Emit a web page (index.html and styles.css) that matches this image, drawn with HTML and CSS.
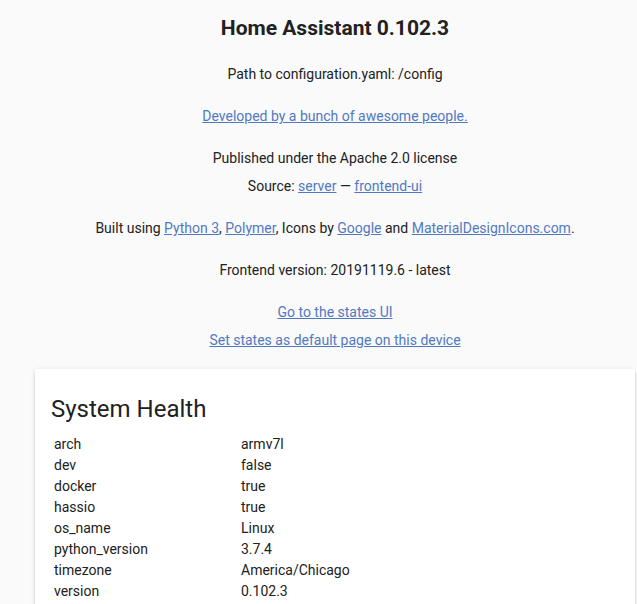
FILE: index.html
```html
<!DOCTYPE html>
<html>
<head>
<meta charset="utf-8">
<link rel="stylesheet" href="styles.css">
</head>
<body>
<div class="page">
  <div class="about">
    <h1 class="title">Home Assistant 0.102.3</h1>
    <p>Path to configuration.yaml: /config</p>
    <p><a href="#">Developed by a bunch of awesome people.</a></p>
    <p>Published under the Apache 2.0 license<br>Source: <a href="#">server</a> — <a href="#">frontend-ui</a></p>
    <p>Built using <a href="#">Python 3</a>, <a href="#">Polymer</a>, Icons by <a href="#">Google</a> and <a href="#">MaterialDesignIcons.com</a>.</p>
    <p>Frontend version: 20191119.6 - latest</p>
    <p><a href="#">Go to the states UI</a><br><a href="#">Set states as default page on this device</a></p>
  </div>
  <div class="card">
    <h2 class="card-title">System Health</h2>
    <table class="health">
      <tr><td class="key">arch</td><td>armv7l</td></tr>
      <tr><td class="key">dev</td><td>false</td></tr>
      <tr><td class="key">docker</td><td>true</td></tr>
      <tr><td class="key">hassio</td><td>true</td></tr>
      <tr><td class="key">os_name</td><td>Linux</td></tr>
      <tr><td class="key">python_version</td><td>3.7.4</td></tr>
      <tr><td class="key">timezone</td><td>America/Chicago</td></tr>
      <tr><td class="key">version</td><td>0.102.3</td></tr>
    </table>
  </div>
</div>
</body>
</html>
```
FILE: styles.css
```css
html, body {
  margin: 0;
  padding: 0;
  background: #fafafa;
  color: #212121;
  font-family: Roboto, "Liberation Sans", sans-serif;
  font-size: 14px;
}
.page {
  width: 600px;
  margin-left: 35px;
}
.about {
  text-align: center;
  line-height: 28px;
}
.title {
  font-size: 21px;
  font-weight: 700;
  line-height: 32px;
  margin: 12px 0 16px;
}
.about p {
  margin: 14px 0;
}
.about a {
  color: #5179c2;
  text-decoration: underline;
}
.card {
  margin-top: 15px;
  background: #fff;
  border-radius: 2px;
  box-shadow: 0 2px 2px 0 rgba(0,0,0,0.14), 0 1px 5px 0 rgba(0,0,0,0.12), 0 3px 1px -2px rgba(0,0,0,0.2);
  padding: 0 16px 16px;
}
.card-title {
  margin: 0;
  padding: 24px 0 9px;
  font-size: 24px;
  font-weight: 400;
  line-height: 32px;
}
.health {
  border-collapse: collapse;
}
.health td {
  padding: 0 0 0 3px;
  line-height: 21px;
}
.health .key {
  width: 184px;
}
```
